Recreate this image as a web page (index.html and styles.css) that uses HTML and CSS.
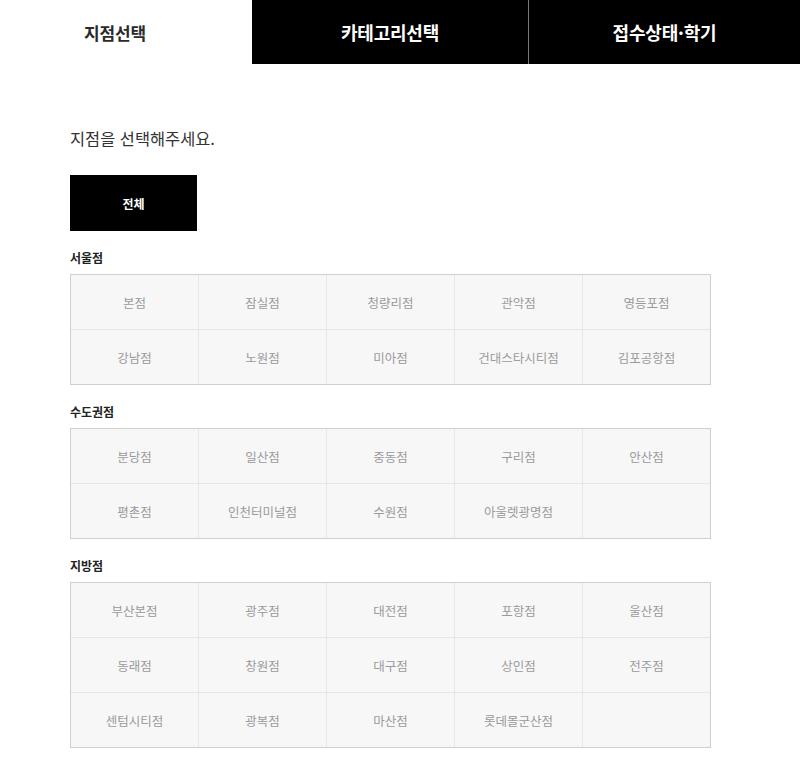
FILE: index.html
```html
<!DOCTYPE html>
<html lang="ko">
<head>
<meta charset="utf-8">
<link rel="stylesheet" href="styles.css">
</head>
<body>
<nav class="tabs">
  <div class="tab tab-active">지점선택</div>
  <div class="tab tab-dark">카테고리선택</div>
  <div class="tab tab-dark tab-last">접수상태·학기</div>
</nav>
<main class="main">
  <h1 class="title">지점을 선택해주세요.</h1>
  <button class="all-btn">전체</button>

  <h2 class="group-label">서울점</h2>
  <div class="grid">
    <div class="cell">본점</div>
    <div class="cell">잠실점</div>
    <div class="cell">청량리점</div>
    <div class="cell">관악점</div>
    <div class="cell">영등포점</div>
    <div class="cell">강남점</div>
    <div class="cell">노원점</div>
    <div class="cell">미아점</div>
    <div class="cell">건대스타시티점</div>
    <div class="cell">김포공항점</div>
  </div>

  <h2 class="group-label">수도권점</h2>
  <div class="grid">
    <div class="cell">분당점</div>
    <div class="cell">일산점</div>
    <div class="cell">중동점</div>
    <div class="cell">구리점</div>
    <div class="cell">안산점</div>
    <div class="cell">평촌점</div>
    <div class="cell">인천터미널점</div>
    <div class="cell">수원점</div>
    <div class="cell">아울렛광명점</div>
    <div class="cell"></div>
  </div>

  <h2 class="group-label">지방점</h2>
  <div class="grid">
    <div class="cell">부산본점</div>
    <div class="cell">광주점</div>
    <div class="cell">대전점</div>
    <div class="cell">포항점</div>
    <div class="cell">울산점</div>
    <div class="cell">동래점</div>
    <div class="cell">창원점</div>
    <div class="cell">대구점</div>
    <div class="cell">상인점</div>
    <div class="cell">전주점</div>
    <div class="cell">센텀시티점</div>
    <div class="cell">광복점</div>
    <div class="cell">마산점</div>
    <div class="cell">롯데몰군산점</div>
    <div class="cell"></div>
  </div>
</main>
</body>
</html>
```

FILE: styles.css
```css
* { box-sizing: border-box; }
html, body { margin: 0; padding: 0; background: #fff; }
body {
  font-family: "Noto Sans CJK KR", "Noto Sans", sans-serif;
  color: #222;
  width: 800px;
}
.tabs {
  display: grid;
  grid-template-columns: 252px 276px 1fr;
  height: 64px;
}
.tab {
  display: flex;
  align-items: center;
  justify-content: center;
  font-size: 18px;
  font-weight: 700;
  letter-spacing: -0.2px;
}
.tab-active {
  background: #fff;
  color: #2a2a2a;
  font-size: 17px;
  padding-right: 22px;
}
.tab-dark { background: #000; color: #fff; }
.tab-last { border-left: 1px solid #777; }

.main { padding: 0 0 0 70px; }
.title {
  margin: 62px 0 0;
  font-size: 16.4px;
  font-weight: 400;
  line-height: 24px;
  color: #333;
}
.all-btn {
  display: block;
  margin-top: 25px;
  width: 127px;
  height: 56px;
  background: #000;
  color: #fff;
  border: 0;
  font-family: inherit;
  font-size: 12px;
  font-weight: 700;
  padding: 0;
}
.group-label {
  margin: 18px 0 0;
  font-size: 12px;
  font-weight: 700;
  line-height: 18px;
  color: #222;
}
.grid {
  margin-top: 7px;
  width: 641px;
  display: grid;
  grid-template-columns: repeat(5, 127px);
  grid-auto-rows: 54px;
  gap: 1px;
  background: #e6e6e6;
  border: 1px solid #cfcfcf;
}
.cell {
  background: #f7f7f7;
  display: flex;
  align-items: center;
  justify-content: center;
  font-size: 12.5px;
  color: #9a9a9a;
}
```
